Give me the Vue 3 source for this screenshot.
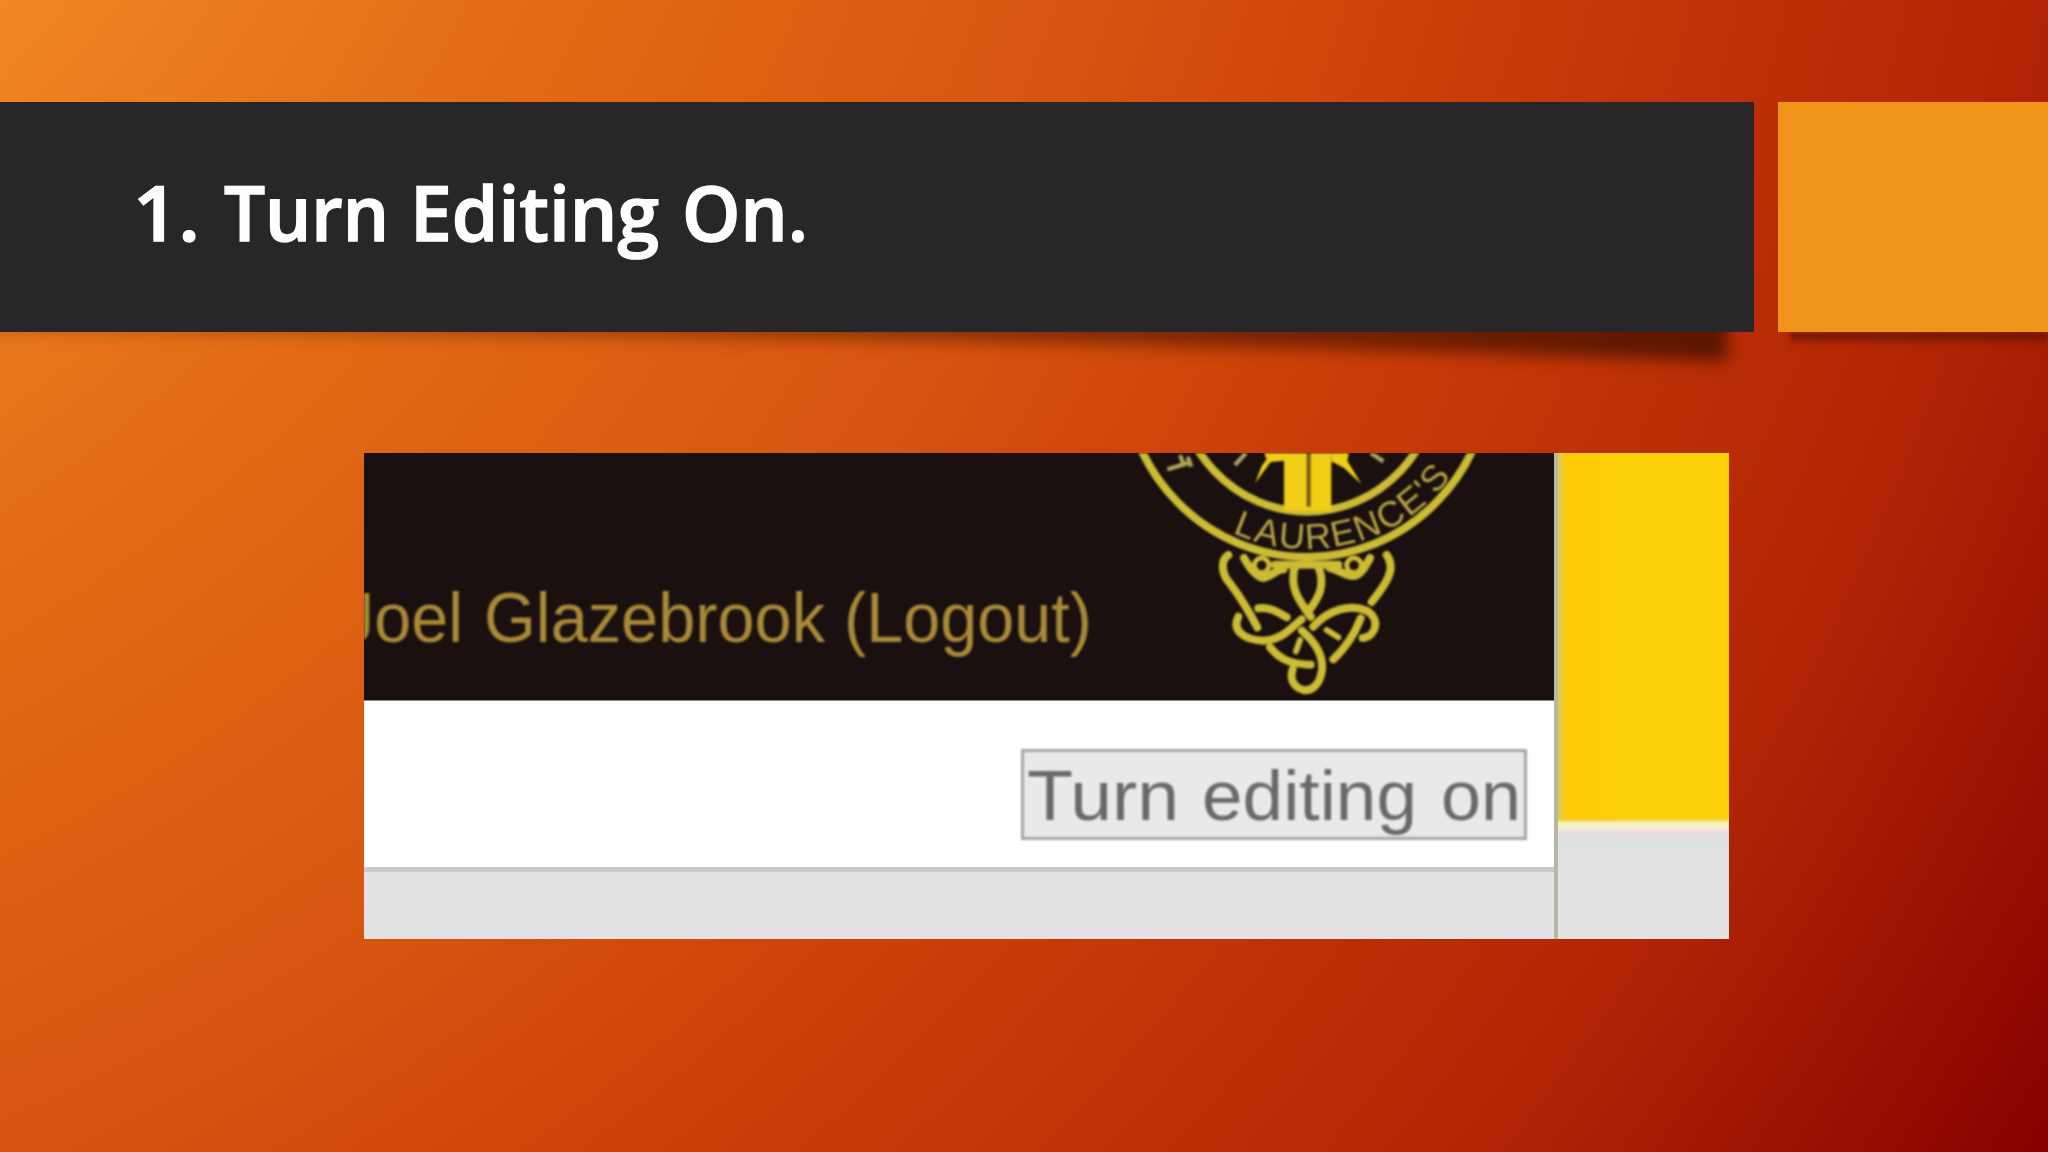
<script setup>
import { ref } from "vue";

// word positions of the slide title
const titleWords = ref([
    { text: "1.", x: 133, width: 67 },
    { text: "Turn", x: 224, width: 165 },
    { text: "Editing", x: 410, width: 249 },
    { text: "On.", x: 682, width: 126 },
]);

const userWords = ref([
    { text: "Joel", x: -23, width: 122 },
    { text: "Glazebrook", x: 120, width: 341 },
    { text: "(Logout)", x: 480, width: 248 },
]);

const buttonWords = ref([
    { text: "Turn", x: 4, width: 152 },
    { text: "editing", x: 179, width: 215 },
    { text: "on", x: 418, width: 80 },
]);
</script>

<template>
    <div class="slide">
        <header class="slide_header">
            <div class="title_bar">
                <svg class="title_shadow" width="1790" height="330" viewBox="0 0 1790 330">
                    <defs>
                        <linearGradient id="shadow-fade">
                            <stop offset="0" stop-color="#5a1c00" stop-opacity="0.25" />
                            <stop offset="0.5" stop-color="#5a1c00" stop-opacity="0.55" />
                            <stop offset="1" stop-color="#421000" stop-opacity="0.8" />
                        </linearGradient>
                    </defs>
                    <path d="M-40 190 H1728 V259 Q1000 234 -40 230 Z" fill="url(#shadow-fade)" />
                </svg>
                <svg class="title_text" width="1754" height="230" viewBox="0 0 1754 230">
                    <text v-for="word in titleWords" :key="word.text" :x="word.x" y="139" :textLength="word.width"
                        lengthAdjust="spacingAndGlyphs">{{ word.text }}</text>
                </svg>
            </div>
            <div class="title_block"></div>
        </header>

        <main class="capture">
            <div class="capture_page">
                <div class="page_head">
                    <svg class="user_text" width="756" height="247" viewBox="0 0 756 247">
                        <text v-for="word in userWords" :key="word.text" :x="word.x" y="189" :textLength="word.width"
                            lengthAdjust="spacingAndGlyphs">{{ word.text }}</text>
                    </svg>
                    <svg class="crest" width="380" height="247" viewBox="0 39 1140 741">
                        <defs>
                            <path id="crest-arc" d="M20 -213 A540 540 0 0 0 1100 -213" />
                        </defs>
                        <!-- rings -->
                        <g class="crest_line">
                            <ellipse cx="561" cy="-217" rx="552" ry="568" stroke-width="24" />
                            <ellipse cx="562" cy="-205" rx="396" ry="420" stroke-width="24" />
                        </g>
                        <!-- gridiron and rays -->
                        <path class="crest_fill" d="M492 20 H634 V212 H492 Z" />
                        <path class="crest_gap" d="M566 20 V200" />
                        <path class="crest_fill" d="M425 20 H492 V62 L452 66 L405 130 L425 78 L440 58 Z" />
                        <path class="crest_fill" d="M634 20 H690 L682 62 L724 132 L672 84 L634 64 Z" />
                        <path class="crest_thin" d="M345 75 L378 39 M752 39 L790 64" />
                        <text class="crest_name">
                            <textPath href="#crest-arc" startOffset="618" textLength="732"
                                lengthAdjust="spacing">LAURENCE'S</textPath>
                        </text>
                        <path class="crest_thin" d="M142 88 L208 68 M180 45 L192 76 M203 50 L214 80" />
                        <!-- knot -->
                        <g class="crest_line" stroke-width="24">
                            <path d="M325 345 C300 360 305 405 330 430 C360 470 390 520 412 562" />
                            <path d="M800 345 C830 385 800 430 755 486" />
                            <path d="M372 354 C388 382 404 408 430 414 C455 410 465 390 490 388" />
                            <path d="M750 354 C735 382 720 408 700 408 C675 408 660 390 630 384" />
                            <circle cx="425" cy="376" r="22" stroke-width="15" />
                            <circle cx="702" cy="376" r="22" stroke-width="15" />
                            <path d="M465 374 H655" />
                            <path d="M524 382 C508 440 535 480 572 530" />
                            <path d="M596 382 C616 435 598 470 568 510" />
                            <path d="M415 505 C450 500 475 518 500 532" />
                            <path d="M355 530 C335 570 370 600 430 602 C490 598 510 565 545 538" />
                            <path d="M580 560 C625 510 690 490 740 512 C785 540 765 590 728 594" />
                            <path d="M722 535 C705 580 680 620 640 658" />
                            <path d="M620 570 L655 592" stroke-width="18" />
                            <path d="M450 622 C485 665 520 672 572 674" />
                            <path d="M528 634 L540 600" stroke-width="18" />
                            <path
                                d="M546 572 C590 610 610 650 606 690 C600 735 575 754 550 750 C520 742 508 715 518 688" />
                        </g>
                    </svg>
                </div>
                <div class="page_bar">
                    <div class="edit_button">
                        <svg width="504" height="90" viewBox="0 0 504 90">
                            <text v-for="word in buttonWords" :key="word.text" :x="word.x" y="71"
                                :textLength="word.width" lengthAdjust="spacingAndGlyphs">{{ word.text }}</text>
                        </svg>
                    </div>
                </div>
                <div class="page_body"></div>
            </div>
            <div class="capture_side">
                <div class="side_yellow"></div>
                <div class="side_grey"></div>
            </div>
        </main>
    </div>
</template>

<style>
body {
    margin: 0;
}
</style>

<style scoped>
.slide {
    box-sizing: border-box;
    width: 2048px;
    height: 1152px;
    padding-top: 102px;
    overflow: hidden;
    background: radial-gradient(circle 3259px at -700px -600px, #f08723 28.3%, #e46c17 41%, #d7540f 57.9%, #cb3e08 68.7%, #b02405 86.3%, #870000 100%);
}

.slide_header {
    display: flex;
    gap: 24px;
    height: 230px;
}

.title_bar {
    position: relative;
    width: 1754px;
    background: #29262a;
}

/* lifted shadow under the bar, deeper on the right */
.title_shadow {
    position: absolute;
    left: 0;
    top: 0;
    filter: blur(8px);
    overflow: visible;
}

.title_text {
    position: relative;
    display: block;
    background: #29262a;
}

.title_text text {
    font-family: "Open Sans", sans-serif;
    font-size: 76px;
    font-weight: 600;
    fill: #fffdff;
    stroke: #fffdff;
    stroke-width: 1.5px;
}

.title_block {
    position: relative;
    width: 270px;
    background: #ef9319;
}

.title_block::after {
    content: "";
    position: absolute;
    left: 12px;
    right: 0;
    top: 230px;
    height: 14px;
    background: linear-gradient(#691400, transparent);
    filter: blur(2px);
    clip-path: inset(0 0 -10px -10px);
}

/* enlarged page capture */
.capture {
    display: flex;
    width: 1365px;
    height: 486px;
    margin: 121px 0 0 364px;
    overflow: hidden;
    background: #e3e1e3;
}

.capture_page {
    display: flex;
    flex-direction: column;
    width: 1190px;
}

.page_head {
    display: flex;
    height: 247px;
    overflow: hidden;
    background: #1a100f;
    border-bottom: 1px solid #8d8788;
}

.user_text {
    flex: none;
    filter: blur(1.2px);
}

.user_text text {
    font-family: "Liberation Sans", Arial, sans-serif;
    font-size: 71px;
    fill: #a98a38;
}

.crest {
    flex: none;
    filter: blur(1px);
}

.crest_line {
    fill: none;
    stroke: #cbbb35;
    stroke-linecap: round;
}

.crest_fill {
    fill: #f0ce16;
}

.crest_gap {
    fill: none;
    stroke: #735a10;
    stroke-width: 12;
}

.crest_thin {
    fill: none;
    stroke: #aca25c;
    stroke-width: 13;
}

.crest_name {
    font-family: "Liberation Sans", Arial, sans-serif;
    font-size: 108px;
    fill: #b8a646;
}

.page_bar {
    display: flex;
    justify-content: flex-end;
    align-items: flex-start;
    box-sizing: border-box;
    height: 166px;
    padding: 48px 27px 0 0;
    background: #fff;
}

.edit_button {
    box-sizing: border-box;
    width: 506px;
    height: 91px;
    border: 3px solid #a5a4a6;
    background: #e9e8ea;
    filter: blur(0.8px);
}

.edit_button svg {
    display: block;
    margin: -3px 0 0 -1px;
}

.edit_button text {
    font-family: "Liberation Sans", Arial, sans-serif;
    font-size: 71px;
    fill: #6a6869;
}

.page_body {
    flex: 1;
    border-top: 5px solid #cbcacb;
    background: #e3e1e3;
}

.capture_side {
    flex: 1;
    border-left: 4px solid #b7b89f;
}

.side_yellow {
    height: 366px;
    background: linear-gradient(90deg, #dccb5c 0, #ffca06 9px, #fdcf08 60px);
}

.side_grey {
    height: 120px;
    background: linear-gradient(#e5cc4c 0, #fbf3a2 4px, #f6eedb 9px, #e7dcdd 14px, #dde0e2 20px, #e2e2e2 40px);
}
</style>
